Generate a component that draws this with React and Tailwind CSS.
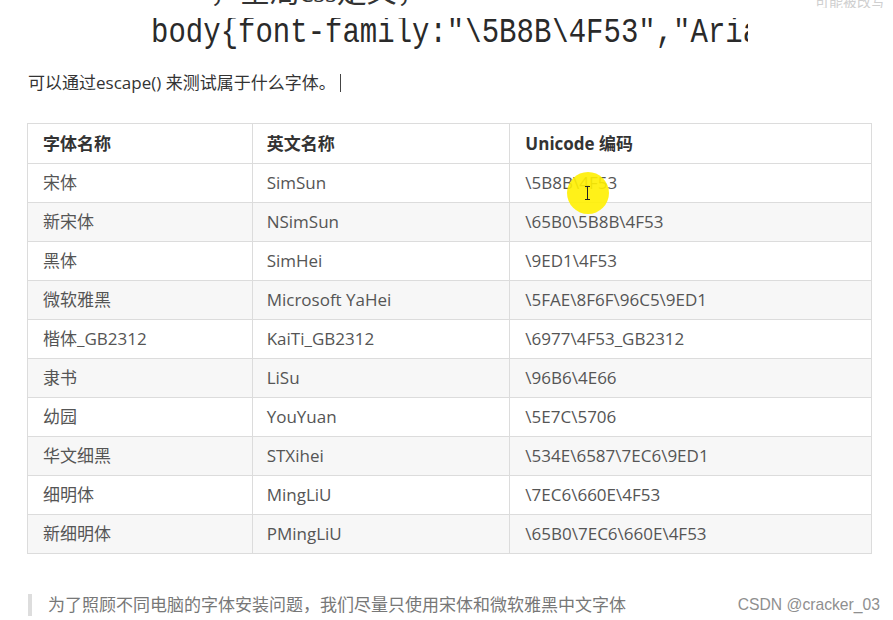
import React from "react";

const rows = [
  ["宋体", "SimSun", "\\5B8B\\4F53"],
  ["新宋体", "NSimSun", "\\65B0\\5B8B\\4F53"],
  ["黑体", "SimHei", "\\9ED1\\4F53"],
  ["微软雅黑", "Microsoft YaHei", "\\5FAE\\8F6F\\96C5\\9ED1"],
  ["楷体_GB2312", "KaiTi_GB2312", "\\6977\\4F53_GB2312"],
  ["隶书", "LiSu", "\\96B6\\4E66"],
  ["幼园", "YouYuan", "\\5E7C\\5706"],
  ["华文细黑", "STXihei", "\\534E\\6587\\7EC6\\9ED1"],
  ["细明体", "MingLiU", "\\7EC6\\660E\\4F53"],
  ["新细明体", "PMingLiU", "\\65B0\\7EC6\\660E\\4F53"],
];

const sans = "font-['Open_Sans','Noto_Sans_CJK_SC',sans-serif]";

export default function App() {
  return (
    <div className="relative w-[893px] h-[620px] overflow-hidden bg-white text-[#333]">
      {/* slide text, only its bottom edge shows */}
      <div className="h-[8px] overflow-hidden flex">
        <div className="ml-[210px] -mt-[23px] font-['Liberation_Serif','Noto_Sans_CJK_SC',serif] text-[30px] leading-[30px] text-[#333]">
          ，全局css定义，
        </div>
        <div className="ml-auto mr-[8px] -mt-[6px] text-[14px] leading-[14px] text-[#cfcfcf] font-['Noto_Sans_CJK_SC',sans-serif]">
          可能被改写
        </div>
      </div>
      <div className="ml-[151px] w-[597px] overflow-hidden whitespace-nowrap mt-[10px]">
        <div className="font-['Liberation_Mono',monospace] text-[29px] leading-[32px] text-[#2a2a2a] scale-y-[1.2]">
          body{"{"}font-family:"\5B8B\4F53","Arial"{"}"}
        </div>
      </div>

      <div className={`mt-[23px] ml-[28px] flex items-center text-[17px] leading-[20px] text-[#333] ${sans}`}>
        <span>可以通过escape() 来测试属于什么字体。</span>
        <span className="ml-[4px] w-px h-[18px] bg-[#444]" />
      </div>

      <table className={`mt-[30px] ml-[27px] w-[845px] border-collapse text-[17px] ${sans}`}>
        <colgroup>
          <col className="w-[225px]" />
          <col className="w-[258px]" />
          <col className="w-[362px]" />
        </colgroup>
        <thead>
          <tr className="h-[40px]">
            <th className="border border-[#dcdcdc] text-left font-bold pl-[15px] text-[#333]">字体名称</th>
            <th className="border border-[#dcdcdc] text-left font-bold pl-[14px] text-[#333]">英文名称</th>
            <th className="border border-[#dcdcdc] text-left font-bold pl-[15px] text-[#333]">Unicode 编码</th>
          </tr>
        </thead>
        <tbody>
          {rows.map((r, i) => (
            <tr key={i} className={`h-[39px] ${i % 2 === 1 ? "bg-[#f7f7f7]" : "bg-white"}`}>
              <td className="border border-[#dcdcdc] pl-[15px] text-[#555]">{r[0]}</td>
              <td className="border border-[#dcdcdc] pl-[14px] text-[#555]">{r[1]}</td>
              <td className="border border-[#dcdcdc] pl-[15px] text-[#555]">{r[2]}</td>
            </tr>
          ))}
        </tbody>
      </table>

      <div className="mt-[39px] ml-[28px] flex items-center justify-between pr-[13px]">
        <div className={`border-l-[4px] border-[#dddddd] pl-[16px] h-[22px] flex items-center text-[17px] text-[#777] ${sans}`}>
          为了照顾不同电脑的字体安装问题，我们尽量只使用宋体和微软雅黑中文字体
        </div>
        <div className="font-['Liberation_Sans',sans-serif] text-[15.7px] text-[#8f8f8f]">
          CSDN @cracker_03
        </div>
      </div>

      {/* cursor highlight */}
      <div className="absolute left-[567px] top-[172px] w-[42px] h-[42px] rounded-full bg-[#fff000]/90" />
      <div className="absolute left-[586px] top-[186px] w-[3px] h-[14px] flex flex-col items-center">
        <div className="w-[5px] h-px bg-[#222]" />
        <div className="w-px flex-1 bg-[#222]" />
        <div className="w-[5px] h-px bg-[#222]" />
      </div>
    </div>
  );
}
